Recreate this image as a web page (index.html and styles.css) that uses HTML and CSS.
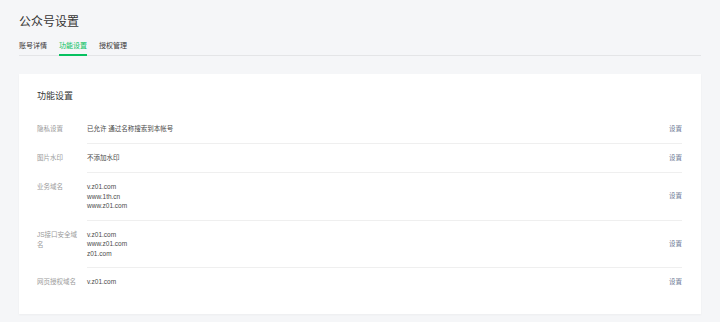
FILE: index.html
```html
<!DOCTYPE html>
<html lang="zh-CN">
<head>
<meta charset="utf-8">
<title>公众号设置</title>
<link rel="stylesheet" href="styles.css">
</head>
<body>
<div class="page">
  <h1 class="title">公众号设置</h1>
  <nav class="tabs">
    <a class="tab">账号详情</a>
    <a class="tab active">功能设置</a>
    <a class="tab">授权管理</a>
  </nav>
  <section class="card">
    <h2 class="card-title">功能设置</h2>
    <div class="row">
      <div class="label">隐私设置</div>
      <div class="content">
        <div class="value">已允许 通过名称搜索到本帐号</div>
        <a class="action">设置</a>
      </div>
    </div>
    <div class="row">
      <div class="label">图片水印</div>
      <div class="content">
        <div class="value">不添加水印</div>
        <a class="action">设置</a>
      </div>
    </div>
    <div class="row">
      <div class="label">业务域名</div>
      <div class="content">
        <div class="value"><div>v.z01.com</div><div>www.1th.cn</div><div>www.z01.com</div></div>
        <a class="action">设置</a>
      </div>
    </div>
    <div class="row">
      <div class="label">JS接口安全域名</div>
      <div class="content">
        <div class="value"><div>v.z01.com</div><div>www.z01.com</div><div>z01.com</div></div>
        <a class="action">设置</a>
      </div>
    </div>
    <div class="row">
      <div class="label">网页授权域名</div>
      <div class="content">
        <div class="value">v.z01.com</div>
        <a class="action">设置</a>
      </div>
    </div>
  </section>
</div>
</body>
</html>
```

FILE: styles.css
```css
* { box-sizing: border-box; }
html, body {
  margin: 0;
  padding: 0;
  background: #f5f6f8;
  font-family: "Liberation Sans", "Noto Sans CJK SC", sans-serif;
  color: #353535;
}
.page {
  padding: 14px 19px 0 19px;
  height: 322px;
}
.title {
  margin: 0;
  font-size: 12px;
  line-height: 16px;
  font-weight: normal;
  color: #353535;
}
.tabs {
  margin-top: 8px;
  display: flex;
  border-bottom: 1px solid #e4e5e7;
}
.tab {
  font-size: 7px;
  line-height: 10px;
  padding: 3px 0 3px;
  margin-right: 12px;
  color: #353535;
  border-bottom: 2px solid transparent;
  margin-bottom: -1px;
}
.tab.active {
  color: #07c160;
  border-bottom-color: #07c160;
}
.card {
  margin-top: 18px;
  background: #fff;
  padding: 16px 19px 18px 18px;
  box-shadow: 0 1px 2px rgba(0,0,0,0.04);
}
.card-title {
  margin: 0 0 13px;
  font-size: 9px;
  line-height: 12px;
  font-weight: normal;
  color: #353535;
}
.row {
  display: flex;
  font-size: 6.5px;
  line-height: 10px;
}
.label {
  width: 50px;
  flex: none;
  padding: 9px 8px 9px 0;
  color: #9a9a9a;
}
.content {
  flex: 1;
  display: flex;
  justify-content: space-between;
  align-items: center;
  padding: 9px 0;
  border-bottom: 1px solid #efefef;
}
.row:last-child .content { border-bottom: none; }
.value { color: #4a4a4a; }
.value > div { height: 9.5px; line-height: 9.5px; }
.action { color: #6b7793; }
```
